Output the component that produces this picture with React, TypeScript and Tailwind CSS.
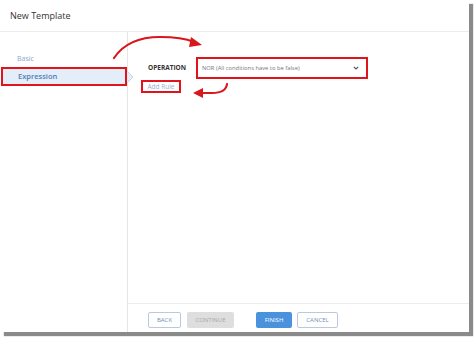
import React from "react";

const font = { fontFamily: '"Open Sans", "Noto Sans", Arial, sans-serif' };

export default function App() {
  return (
    <div className="w-[474px] h-[338px] bg-white overflow-hidden" style={font}>
      <div className="relative w-[469px] h-[332px] bg-white flex flex-col shadow-[4px_4px_1px_#8a8a8a]">
        <div className="h-[32px] flex items-center pl-[10px] border-b border-[#ececec] text-[9px] text-[#333]">
          New Template
        </div>

        <div className="flex flex-1">
          <div className="w-[128px] border-r border-[#e6e6e6] pt-[20px] flex flex-col">
            <div className="pl-[17px] h-[14px] flex items-center text-[7px] text-[#8ba7cc]">Basic</div>
            <div className="mt-[1px] ml-[1px] h-[19px] border-2 border-[#e2141b] bg-[#e4eef9] flex items-center pl-[15px] text-[7.5px] font-semibold text-[#4d7db8]">
              Expression
            </div>
          </div>

          <div className="flex-1 flex flex-col">
            <div className="flex-1 relative pt-[25px] pl-[13px]">
              <div className="flex items-center">
                <span className="w-[55px] pl-[7px] text-[6.5px] font-bold text-[#333]">OPERATION</span>
                <div className="w-[172px] h-[22px] border-2 border-[#e2141b] flex items-center justify-between pl-[4px] pr-[7px] text-[5.8px] text-[#777]">
                  <span>NOR (All conditions have to be false)</span>
                  <svg width="6" height="4" viewBox="0 0 6 4">
                    <path d="M0.8 0.8 L3 3 L5.2 0.8" fill="none" stroke="#555" strokeWidth="1.1" />
                  </svg>
                </div>
              </div>
              <div className="mt-[1px] w-[40px] h-[13px] border-2 border-[#e2141b] flex items-center justify-center text-[6.5px] text-[#9ab0d0]">
                Add Rule
              </div>
            </div>

            <div className="h-[29px] border-t border-[#ececec] flex items-start pt-[8px] pl-[20px] text-[6px]">
              <button className="w-[33px] h-[16px] border border-[#b9c9de] rounded-[2px] bg-white text-[#6f8fb9] uppercase">Back</button>
              <button className="ml-[6px] w-[47px] h-[16px] rounded-[2px] bg-[#dedede] text-[#a8a8a8] uppercase">Continue</button>
              <button className="ml-[22px] w-[36px] h-[16px] rounded-[2px] bg-[#4a92dc] text-white uppercase">Finish</button>
              <button className="ml-[5px] w-[41px] h-[16px] border border-[#b9c9de] rounded-[2px] bg-white text-[#6f8fb9] uppercase">Cancel</button>
            </div>
          </div>
        </div>

        <svg className="absolute left-[126px] top-[70px]" width="9" height="14" viewBox="0 0 9 14">
          <path d="M1 1 L7 7 L1 13" fill="#e4eef9" stroke="#c9d3de" strokeWidth="1" />
        </svg>

        <svg className="absolute left-0 top-0 pointer-events-none" width="469" height="332" viewBox="0 0 469 332">
          <path d="M114 58 Q128 37 160 37 Q182 37 194 42" fill="none" stroke="#d9161c" strokeWidth="2.2" strokeLinecap="round" />
          <path d="M191 37 L202 45 L189 47 Z" fill="#d9161c" />
          <path d="M227 84 Q226 93 212 93 L201 93" fill="none" stroke="#d9161c" strokeWidth="2.2" strokeLinecap="round" />
          <path d="M203 88 L193 93 L203 98 Z" fill="#d9161c" />
        </svg>
      </div>
    </div>
  );
}
